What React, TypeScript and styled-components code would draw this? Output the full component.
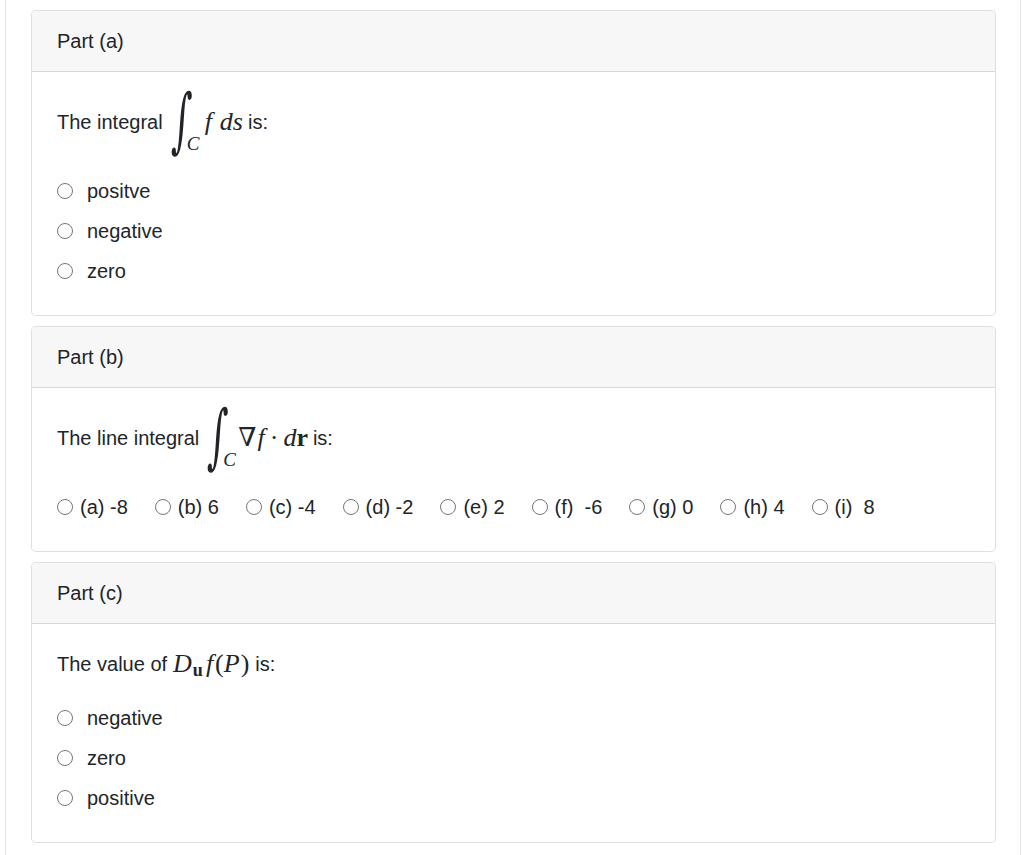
import React from "react";
import styled, { createGlobalStyle } from "styled-components";

const GlobalStyle = createGlobalStyle`
  html, body {
    margin: 0;
    padding: 0;
    background: #ffffff;
  }
  body {
    font-family: "Liberation Sans", Arial, sans-serif;
    font-size: 20px;
    line-height: 30px;
    color: #212529;
  }
`;

const Page = styled.div`
  min-height: 100vh;
  box-sizing: border-box;
  margin: 0 3px 0 5px;
  padding: 10px 24px 10px 25px;
  border-left: 1px solid #e3e3e3;
  border-right: 1px solid #e3e3e3;
`;

const Card = styled.section`
  border: 1px solid rgba(0, 0, 0, 0.125);
  border-radius: 5px;
  margin-bottom: 10px;
  background: #fff;
  overflow: hidden;
`;

const CardHeader = styled.div`
  padding: 15px 25px;
  background: #f7f7f7;
  border-bottom: 1px solid rgba(0, 0, 0, 0.125);
`;

const CardBody = styled.div`
  padding: 25px 25px 24px;
`;

const Para = styled.div<{ $tall?: boolean }>`
  display: flex;
  align-items: center;
  margin-bottom: ${(p) => (p.$tall ? "24px" : "19px")};
  min-height: 30px;
`;

const Word = styled.span<{ $gap?: number }>`
  white-space: pre;
  margin-right: ${(p) => p.$gap ?? 0}px;
`;

/* the sign hangs 6px below the line so the text sits near the top, as in the reference */
const IntegralBox = styled.span`
  position: relative;
  display: inline-block;
  width: 32px;
  height: 56px;
  margin: 0 2px -6px 8px;
`;

const IntegralSign = styled.span`
  position: absolute;
  left: 1px;
  top: -5px;
  font-family: "DejaVu Serif", "Liberation Serif", serif;
  font-size: 38px;
  line-height: 56px;
  transform: scale(0.95, 1.85) skewX(-6deg);
  transform-origin: 50% 50%;
`;

const IntegralSub = styled.span`
  position: absolute;
  left: 16px;
  bottom: 1px;
  font-family: "Liberation Serif", "DejaVu Serif", serif;
  font-style: italic;
  font-size: 19px;
  line-height: 17px;
`;

const MathVar = styled.span<{ $bold?: boolean; $italic?: boolean; $gap?: number; $lead?: number }>`
  font-family: "Liberation Serif", "DejaVu Serif", serif;
  font-size: 26px;
  font-style: ${(p) => (p.$italic === false ? "normal" : "italic")};
  font-weight: ${(p) => (p.$bold ? 700 : 400)};
  margin-left: ${(p) => p.$lead ?? 0}px;
  margin-right: ${(p) => p.$gap ?? 0}px;
`;

const MathSub = styled.span`
  font-family: "Liberation Serif", "DejaVu Serif", serif;
  font-size: 18px;
  font-weight: 700;
  position: relative;
  top: 6px;
  margin: 0 3px 0 1px;
`;

const RadioList = styled.div<{ $inline?: boolean }>`
  display: flex;
  flex-direction: ${(p) => (p.$inline ? "row" : "column")};
`;

const RadioItem = styled.label<{ $inline?: boolean }>`
  display: flex;
  align-items: center;
  height: 40px;
  margin-right: ${(p) => (p.$inline ? "27px" : "0")};
`;

const Circle = styled.span<{ $inline?: boolean }>`
  width: 16px;
  height: 16px;
  box-sizing: border-box;
  border: 1px solid #767676;
  border-radius: 50%;
  background: #fff;
  margin-right: ${(p) => (p.$inline ? "7px" : "14px")};
  flex-shrink: 0;
`;

const RadioLabel = styled.span`
  white-space: pre;
`;

const Integral = ({ sub }: { sub: string }) => (
  <IntegralBox>
    <IntegralSign>∫</IntegralSign>
    <IntegralSub>{sub}</IntegralSub>
  </IntegralBox>
);

const Radios = ({ options, inline }: { options: string[]; inline?: boolean }) => (
  <RadioList $inline={inline}>
    {options.map((o) => (
      <RadioItem key={o} $inline={inline}>
        <Circle $inline={inline} />
        <RadioLabel>{o}</RadioLabel>
      </RadioItem>
    ))}
  </RadioList>
);

const App = () => {
  return (
    <>
      <GlobalStyle />
      <Page>
        <Card>
          <CardHeader>Part (a)</CardHeader>
          <CardBody>
            <Para $tall>
              <Word>The integral</Word>
              <Integral sub="C" />
              <MathVar $gap={8}>f</MathVar>
              <MathVar $gap={5}>ds</MathVar>
              <Word>is:</Word>
            </Para>
            <Radios options={["positve", "negative", "zero"]} />
          </CardBody>
        </Card>

        <Card>
          <CardHeader>Part (b)</CardHeader>
          <CardBody>
            <Para $tall>
              <Word>The line integral</Word>
              <Integral sub="C" />
              <MathVar $italic={false} $lead={-3} $gap={1}>∇</MathVar>
              <MathVar $gap={5}>f</MathVar>
              <MathVar $italic={false} $gap={5}>·</MathVar>
              <MathVar>d</MathVar>
              <MathVar $italic={false} $bold $gap={5}>r</MathVar>
              <Word>is:</Word>
            </Para>
            <Radios
              inline
              options={[
                "(a) -8",
                "(b) 6",
                "(c) -4",
                "(d) -2",
                "(e) 2",
                "(f)  -6",
                "(g) 0",
                "(h) 4",
                "(i)  8",
              ]}
            />
          </CardBody>
        </Card>

        <Card>
          <CardHeader>Part (c)</CardHeader>
          <CardBody>
            <Para>
              <Word $gap={6}>The value of</Word>
              <MathVar>D</MathVar>
              <MathSub>u</MathSub>
              <MathVar $gap={2}>f</MathVar>
              <MathVar $italic={false}>(</MathVar>
              <MathVar $gap={1}>P</MathVar>
              <MathVar $italic={false} $gap={6}>)</MathVar>
              <Word>is:</Word>
            </Para>
            <Radios options={["negative", "zero", "positive"]} />
          </CardBody>
        </Card>
      </Page>
    </>
  );
};

export default App;
